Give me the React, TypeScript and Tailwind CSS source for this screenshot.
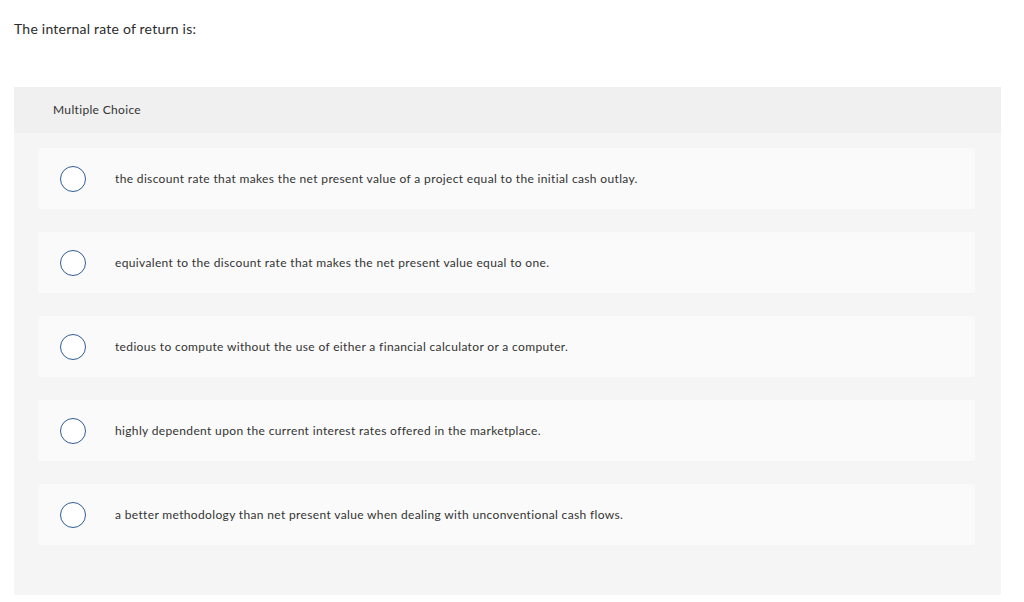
import React from "react";

const options = [
  "the discount rate that makes the net present value of a project equal to the initial cash outlay.",
  "equivalent to the discount rate that makes the net present value equal to one.",
  "tedious to compute without the use of either a financial calculator or a computer.",
  "highly dependent upon the current interest rates offered in the marketplace.",
  "a better methodology than net present value when dealing with unconventional cash flows.",
];

export default function App() {
  return (
    <div
      className="w-[1024px] h-[602px] bg-white text-[#333333] overflow-hidden"
      style={{ fontFamily: "Lato, 'Noto Sans', Arial, sans-serif" }}
    >
      <div className="pl-[14px] pt-[20px] text-[14px] leading-[18px] tracking-[0.22px] text-[#2b2b2b]">
        The internal rate of return is:
      </div>
      <div className="ml-[14px] mt-[49px] w-[987px] rounded-b-[3px] bg-[#f5f5f5]">
        <div className="h-[46px] bg-[#f0f0f0] flex items-center pl-[39px] text-[12px] tracking-[0.33px] text-[#333]">
          Multiple Choice
        </div>
        <div className="flex flex-col gap-[23px] pt-[15px] pb-[50px] pl-[24px] pr-[26px]">
          {options.map((o, i) => (
            <div
              key={i}
              className="h-[61px] rounded-[3px] bg-[#fafafa] flex items-center pl-[22px]"
            >
              <span className="w-[26px] h-[26px] rounded-full border-[1.5px] border-[#2f5d94] bg-white shrink-0" />
              <span className="ml-[29px] text-[12px] tracking-[0.35px] text-[#333]">{o}</span>
            </div>
          ))}
        </div>
      </div>
    </div>
  );
}
